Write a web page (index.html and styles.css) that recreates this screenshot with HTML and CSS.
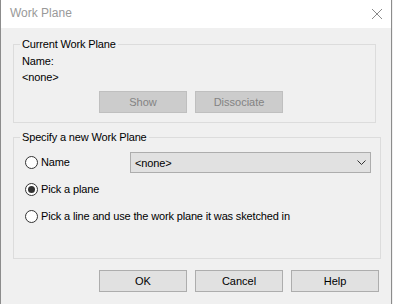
FILE: index.html
```html
<!DOCTYPE html>
<html lang="en">

<head>
    <meta charset="UTF-8">
    <title>Work Plane</title>
    <link rel="stylesheet" href="styles.css">
</head>

<body>
    <div class="window">
        <div class="titlebar">
            <span class="title">Work Plane</span>
            <svg class="close" width="10" height="10" viewBox="0 0 10 10">
                <path d="M0 0L10 10M10 0L0 10" stroke="#8a8a8a" stroke-width="1" fill="none" />
            </svg>
        </div>

        <div class="content">
            <fieldset class="group current">
                <legend>Current Work Plane</legend>
                <div class="line">Name:</div>
                <div class="line second">&lt;none&gt;</div>
                <div class="buttons">
                    <button class="btn" disabled>Show</button>
                    <button class="btn" disabled>Dissociate</button>
                </div>
            </fieldset>

            <fieldset class="group specify">
                <legend>Specify a new Work Plane</legend>
                <div class="row first">
                    <label class="option name-option"><span class="radio"></span>Name</label>
                    <div class="dropdown">
                        <span>&lt;none&gt;</span>
                        <svg width="9" height="5" viewBox="0 0 9 5">
                            <path d="M0.5 0.5L4.5 4.5L8.5 0.5" stroke="#333" stroke-width="1" fill="none" />
                        </svg>
                    </div>
                </div>
                <div class="row second">
                    <label class="option"><span class="radio checked"></span>Pick a plane</label>
                </div>
                <div class="row third">
                    <label class="option"><span class="radio"></span>Pick a line and use the work plane it was sketched in</label>
                </div>
            </fieldset>

            <div class="buttons bottom">
                <button class="btn">OK</button>
                <button class="btn">Cancel</button>
                <button class="btn">Help</button>
            </div>
        </div>
    </div>
</body>

</html>
```

FILE: styles.css
```css
body {
    margin: 0;
    background: #f0f0f0;
    font-family: "Liberation Sans", Arial, sans-serif;
    font-size: 11px;
    letter-spacing: -0.15px;
    color: #000;
}

.window {
    width: 392px;
    height: 304px;
    box-sizing: border-box;
    border-left: 1px solid #8c8c8c;
    border-right: 1px solid #8c8c8c;
    background: #f0f0f0;
}

.titlebar {
    height: 28px;
    background: #fff;
    display: flex;
    align-items: center;
    justify-content: space-between;
    padding: 0 9px 0 9px;
}

.title {
    font-size: 12px;
    line-height: 14px;
    letter-spacing: 0;
    color: #999;
    padding-bottom: 2px;
}

.content {
    padding: 0 12px;
}

.group {
    margin: 0;
    padding: 0 0 0 8px;
    border: 1px solid #dcdcdc;
}

.group legend {
    padding: 0 2px;
    margin-left: -2px;
    line-height: 13px;
}

.current {
    width: 363px;
    box-sizing: border-box;
    margin-top: 10px;
    padding-top: 4px;
    padding-bottom: 9px;
}

.line {
    line-height: 13px;
}

.line.second {
    margin-top: 3px;
}

.buttons {
    display: flex;
    gap: 8px;
    padding-left: 77px;
    margin-top: 7px;
}

.btn {
    width: 88px;
    height: 22px;
    padding: 0;
    margin: 0;
    background: #e1e1e1;
    border: 1px solid #adadad;
    font-family: "Liberation Sans", Arial, sans-serif;
    font-size: 11px;
    color: #000;
}

.btn:disabled {
    background: #cccccc;
    border-color: #bfbfbf;
    color: #838383;
}

.specify {
    width: 368px;
    box-sizing: border-box;
    margin-top: 8px;
    padding-top: 8px;
    padding-bottom: 35px;
}

.row {
    display: flex;
    align-items: center;
}

.row.second {
    margin-top: 10px;
}

.row.third {
    margin-top: 14px;
}

.option {
    display: flex;
    align-items: center;
    gap: 3px;
    line-height: 13px;
    padding-left: 3px;
}

.name-option {
    width: 108px;
    box-sizing: border-box;
    flex-shrink: 0;
}

.radio {
    width: 13px;
    height: 13px;
    box-sizing: border-box;
    border: 1px solid #333;
    border-radius: 50%;
    background: #fff;
    display: flex;
    align-items: center;
    justify-content: center;
}

.radio.checked::after {
    content: "";
    width: 7px;
    height: 7px;
    border-radius: 50%;
    background: #333;
}

.dropdown {
    width: 241px;
    height: 21px;
    box-sizing: border-box;
    background: #e1e1e1;
    border: 1px solid #adadad;
    display: flex;
    align-items: center;
    justify-content: space-between;
    padding: 0 4px 0 4px;
}

.buttons.bottom {
    margin-top: 11px;
    padding-left: 86px;
}
```
